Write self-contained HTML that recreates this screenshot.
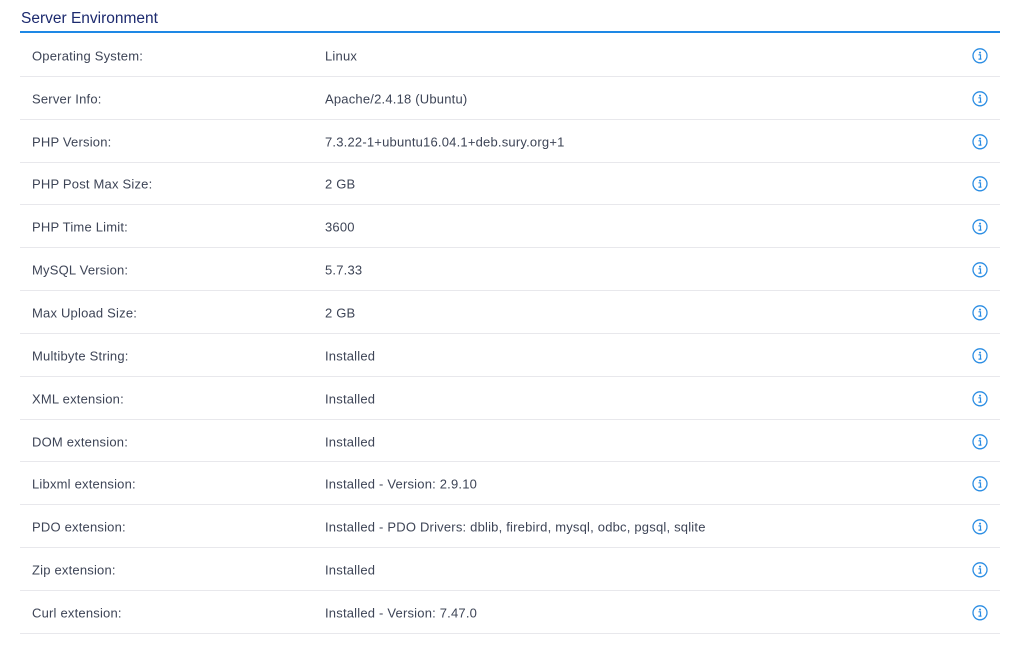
<!DOCTYPE html>
<html><head><meta charset="utf-8"><style>
body{margin:0;background:#fff;font-family:"Liberation Sans",sans-serif;}
.wrap{position:absolute;left:20px;top:0;width:980px;}
h2{margin:0;height:31px;line-height:37px;font-size:15.5px;font-weight:normal;color:#1c2a6e;padding-left:1px;border-bottom:2px solid #1e88e5;box-sizing:content-box;}
#rows{margin-top:1px;}
.row{height:42.85px;border-bottom:1px solid #e8e8ec;box-sizing:border-box;position:relative;font-size:13px;letter-spacing:0.2px;color:#3d4456;}
.row span{position:absolute;top:50%;transform:translateY(-45%);}
.l{left:12px}.v{left:305px}
.row svg{position:absolute;left:952px;top:50%;transform:translateY(-45%);}
</style></head><body><div class="wrap">
<h2>Server Environment</h2>
<div id="rows"></div>
</div>
<script>
var d=[["Operating System:","Linux"],["Server Info:","Apache/2.4.18 (Ubuntu)"],["PHP Version:","7.3.22-1+ubuntu16.04.1+deb.sury.org+1"],["PHP Post Max Size:","2 GB"],["PHP Time Limit:","3600"],["MySQL Version:","5.7.33"],["Max Upload Size:","2 GB"],["Multibyte String:","Installed"],["XML extension:","Installed"],["DOM extension:","Installed"],["Libxml extension:","Installed - Version: 2.9.10"],["PDO extension:","Installed - PDO Drivers: dblib, firebird, mysql, odbc, pgsql, sqlite"],["Zip extension:","Installed"],["Curl extension:","Installed - Version: 7.47.0"]];
var h="";d.forEach(function(r){h+='<div class="row"><span class="l">'+r[0]+'</span><span class="v">'+r[1]+'</span><svg width="16" height="16" viewBox="0 0 16 16"><circle cx="8" cy="8" r="7" fill="none" stroke="#2b8de3" stroke-width="1.3"/><circle cx="8" cy="4.8" r="1" fill="#2b8de3"/><path d="M6.5 7h2v4.3h1M6.5 11.3h2.6" fill="none" stroke="#2b8de3" stroke-width="1.2"/></svg></div>';});
document.getElementById("rows").innerHTML=h;
</script>
</body></html>
